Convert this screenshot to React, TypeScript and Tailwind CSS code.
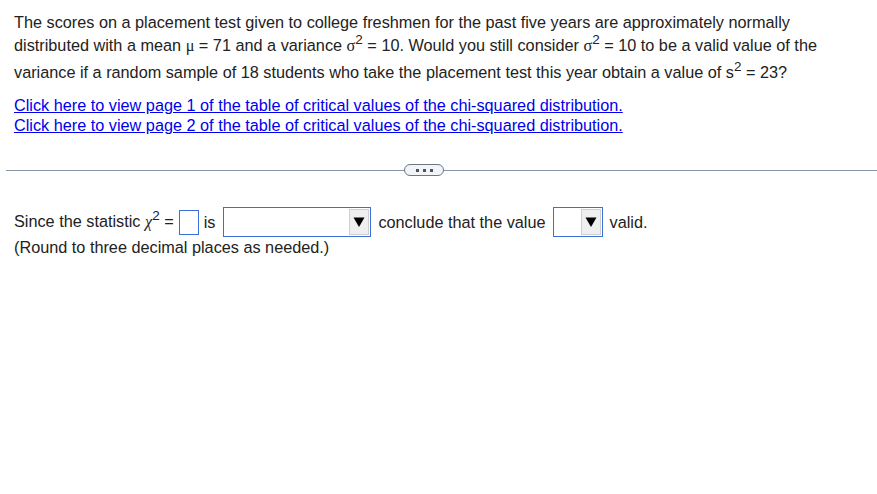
import { ReactNode } from 'react';

function Sup({ children }: { children: ReactNode }) {
  return <sup className="relative -top-[7px] text-[13.5px] leading-none">{children}</sup>;
}

function Dropdown({ width }: { width: string }) {
  return (
    <span className={`inline-flex h-[30px] ${width} items-center justify-end border border-[#3a6fd8] bg-white align-middle`}>
      <span className="mr-[1px] flex h-[26px] w-[20px] items-center justify-center border border-[#cfcfcf] bg-[#efefef]">
        <svg width="12" height="12" viewBox="0 0 12 12">
          <polygon points="0.5,1.5 11.5,1.5 6,11" fill="#000" />
        </svg>
      </span>
    </span>
  );
}

export default function App() {
  return (
    <div className="min-h-screen w-[877px] bg-white text-[16.25px] text-[#222] font-['Liberation_Sans',Arial,sans-serif]">
      <div className="px-[14px] pt-[11px]">
        <div className="leading-[23px]">
          <div>The scores on a placement test given to college freshmen for the past five years are approximately normally</div>
          <div>
            distributed with a mean <span className="font-['Liberation_Serif',serif]">μ</span> = 71 and a variance{' '}
            <span className="font-['Liberation_Serif',serif]">σ</span>
            <Sup>2</Sup> = 10. Would you still consider <span className="font-['Liberation_Serif',serif]">σ</span>
            <Sup>2</Sup> = 10 to be a valid value of the
          </div>
          <div className="mt-[3px]">
            variance if a random sample of 18 students who take the placement test this year obtain a value of s<Sup>2</Sup> = 23?
          </div>
        </div>

        <div className="mt-[11px] flex flex-col leading-[20px] text-[#0000ee]">
          <a href="#" className="underline">Click here to view page 1 of the table of critical values of the chi-squared distribution.</a>
          <a href="#" className="underline">Click here to view page 2 of the table of critical values of the chi-squared distribution.</a>
        </div>
      </div>

      <div className="mt-[29px] flex items-center pl-[6px]">
        <div className="h-[1px] w-[398px] bg-[#8696a6]" />
        <div className="flex h-[12px] w-[40px] items-center justify-center gap-[4px] rounded-full border border-[#6b7785] bg-[#f2f4f7]">
          <span className="h-[3px] w-[3px] bg-[#4a5563]" />
          <span className="h-[3px] w-[3px] bg-[#4a5563]" />
          <span className="h-[3px] w-[3px] bg-[#4a5563]" />
        </div>
        <div className="h-[1px] flex-1 bg-[#8696a6]" />
      </div>

      <div className="px-[14px] pt-[31px]">
        <div className="flex items-center">
          <span>
            Since the statistic <span className="font-['Liberation_Serif',serif] italic">χ</span>
            <Sup>2</Sup> =
          </span>
          <span className="ml-[5px] inline-block h-[25px] w-[20px] border border-[#3a6fd8] bg-white" />
          <span className="ml-[5px]">is</span>
          <span className="ml-[8px]"><Dropdown width="w-[148px]" /></span>
          <span className="ml-[7px]">conclude that the value</span>
          <span className="ml-[7px]"><Dropdown width="w-[50px]" /></span>
          <span className="ml-[7px]">valid.</span>
        </div>
        <p className="leading-[20px]">(Round to three decimal places as needed.)</p>
      </div>
    </div>
  );
}
